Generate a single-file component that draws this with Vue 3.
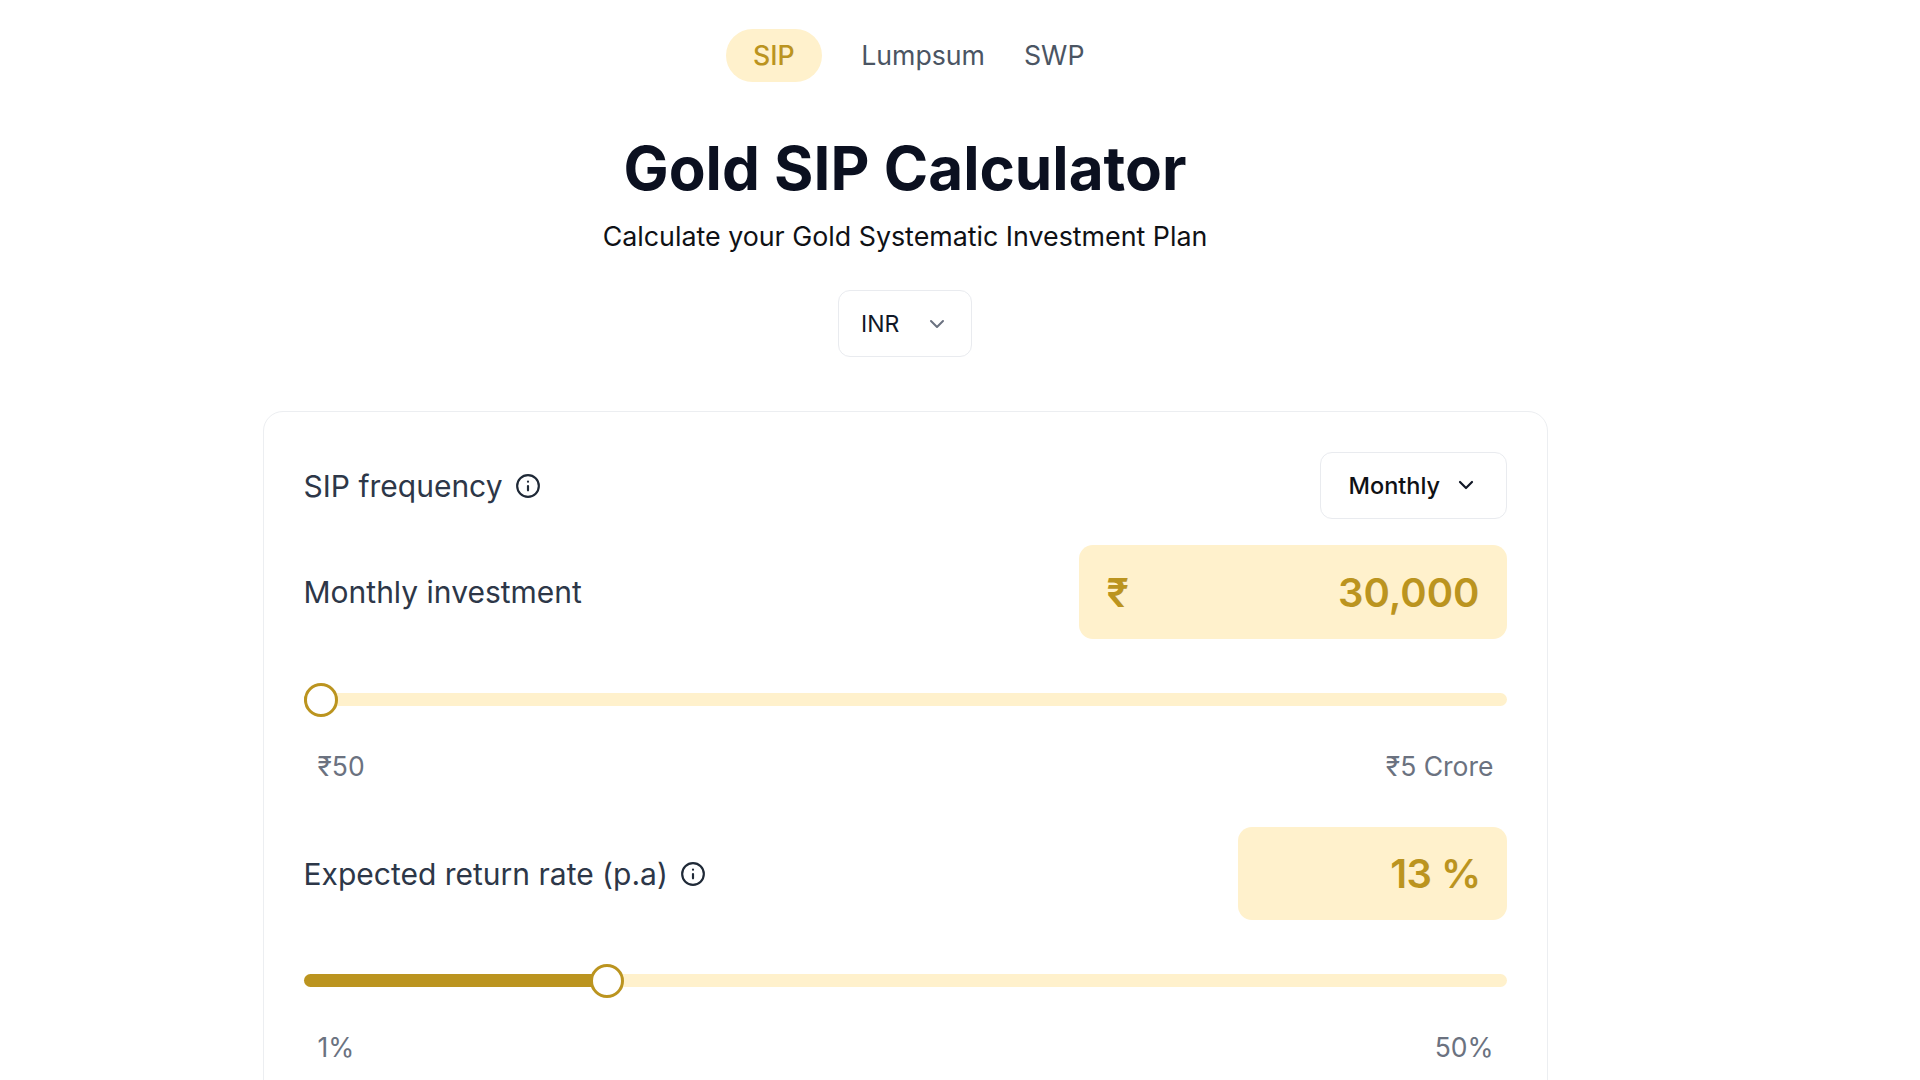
<template>
  <div class="page">
    <nav class="tabs">
      <button v-for="tab in tabs" :key="tab" class="tab" :class="{ active: tab === activeTab }">{{ tab }}</button>
    </nav>

    <h1 class="title">Gold SIP Calculator</h1>
    <p class="subtitle">Calculate your Gold Systematic Investment Plan</p>

    <div class="currency">
      <span>INR</span>
      <svg class="chev" viewBox="0 0 24 24"><path d="M6 9l6 6 6-6" /></svg>
    </div>

    <section class="card">
      <div class="row">
        <div class="label">
          SIP frequency
          <svg class="info" viewBox="0 0 24 24"><circle cx="12" cy="12" r="10" /><path d="M12 16v-4" /><path d="M12 8h.01" /></svg>
        </div>
        <div class="freq">
          <span>Monthly</span>
          <svg class="chev dark" viewBox="0 0 24 24"><path d="M6 9l6 6 6-6" /></svg>
        </div>
      </div>

      <div v-for="item in fields" :key="item.label" class="field">
        <div class="row">
          <div class="label">
            {{ item.label }}
            <svg v-if="item.info" class="info" viewBox="0 0 24 24"><circle cx="12" cy="12" r="10" /><path d="M12 16v-4" /><path d="M12 8h.01" /></svg>
          </div>
          <div class="value" :class="item.cls">
            <span v-if="item.prefix" class="prefix">{{ item.prefix }}</span>
            <span>{{ item.value }}</span>
          </div>
        </div>
        <div class="slider">
          <div class="fill" :style="{ width: `calc(${item.percent}% + 17px)` }"></div>
          <div class="thumb" :style="{ left: item.percent + '%' }"></div>
        </div>
        <div class="range">
          <span>{{ item.min }}</span>
          <span>{{ item.max }}</span>
        </div>
      </div>
    </section>
  </div>
</template>

<script setup>
const tabs = ['SIP', 'Lumpsum', 'SWP']
const activeTab = 'SIP'

const fields = [
  { label: 'Monthly investment', prefix: '₹', value: '30,000', cls: 'wide', percent: 0, min: '₹50', max: '₹5 Crore' },
  { label: 'Expected return rate (p.a)', info: true, value: '13 %', cls: 'narrow', percent: 23.8, min: '1%', max: '50%' }
]
</script>

<style scoped>
.page {
  width: 1810px;
  height: 1080px;
  overflow: hidden;
  display: flex;
  flex-direction: column;
  align-items: center;
  padding-top: 29px;
  box-sizing: border-box;
  font-family: Inter, "Liberation Sans", sans-serif;
  background: #fff;
}

.page > * {
  flex: none;
}

.tabs {
  display: flex;
  align-items: center;
  gap: 39px;
}

.tab {
  height: 53px;
  padding: 0 0 1px;
  border: 0;
  border-radius: 27px;
  background: transparent;
  font: inherit;
  font-size: 26.7px;
  color: #4b5563;
}

.tab.active {
  padding: 0 27.5px 1px;
  background: #fff1cc;
  color: #bb941f;
  font-weight: 500;
}

.title {
  margin: 44px 0 0;
  height: 86px;
  display: flex;
  align-items: center;
  font-size: 60.2px;
  line-height: 1;
  font-weight: 700;
  color: #0b1020;
}

.subtitle {
  margin: 6px 0 0;
  font-size: 26.8px;
  line-height: 36px;
  color: #0f1115;
}

.currency {
  margin-top: 36px;
  width: 134px;
  height: 67px;
  padding: 0 22px;
  box-sizing: border-box;
  display: flex;
  align-items: center;
  justify-content: space-between;
  border: 1px solid #e9ebef;
  border-radius: 12px;
  font-size: 23px;
  color: #111827;
}

.chev {
  width: 24px;
  height: 24px;
  fill: none;
  stroke: #6b7280;
  stroke-width: 2;
  stroke-linecap: round;
  stroke-linejoin: round;
}

.chev.dark {
  stroke: #111827;
  stroke-width: 2.2;
}

.card {
  margin-top: 54px;
  width: 1285px;
  box-sizing: border-box;
  padding: 40px 40px 60px;
  border: 1px solid #eceef1;
  border-radius: 20px;
}

.row {
  display: flex;
  align-items: center;
  justify-content: space-between;
}

.label {
  display: flex;
  align-items: center;
  gap: 12px;
  font-size: 30px;
  color: #2d3748;
}

.info {
  width: 26px;
  height: 26px;
  fill: none;
  stroke: #1f2937;
  stroke-width: 2;
  stroke-linecap: round;
  stroke-linejoin: round;
}

.freq {
  width: 187px;
  height: 67px;
  padding: 0 28px 1px;
  box-sizing: border-box;
  display: flex;
  align-items: center;
  justify-content: space-between;
  border: 1px solid #e9ebef;
  border-radius: 12px;
  font-size: 23.5px;
  font-weight: 500;
  color: #0f1115;
}

.field {
  margin-top: 26px;
}

.field + .field {
  margin-top: 43px;
}

.value {
  height: 94px;
  padding: 0 27px 0 28px;
  box-sizing: border-box;
  display: flex;
  align-items: center;
  justify-content: space-between;
  border-radius: 14px;
  background: #fff1cc;
  color: #bb941f;
  font-size: 40px;
  font-weight: 600;
}

.value.wide {
  width: 428px;
}

.value.narrow {
  width: 269px;
  height: 93px;
  padding-right: 26px;
  justify-content: flex-end;
  letter-spacing: -0.6px;
}

.slider {
  position: relative;
  margin-top: 54px;
  height: 13px;
  border-radius: 7px;
  background: #fff1cc;
}

.fill {
  height: 100%;
  border-radius: 7px;
  background: #bb941f;
}

.thumb {
  position: absolute;
  top: 50%;
  width: 34px;
  height: 34px;
  box-sizing: border-box;
  border: 3px solid #bb941f;
  border-radius: 50%;
  background: #fff;
  transform: translateY(-50%);
}

.range {
  display: flex;
  justify-content: space-between;
  margin-top: 42px;
  padding: 0 13px 0 14px;
  font-size: 26.5px;
  line-height: 36px;
  color: #6b7280;
}
</style>

<style>
html,
body {
  background: #fff;
  overflow: hidden;
}
</style>
